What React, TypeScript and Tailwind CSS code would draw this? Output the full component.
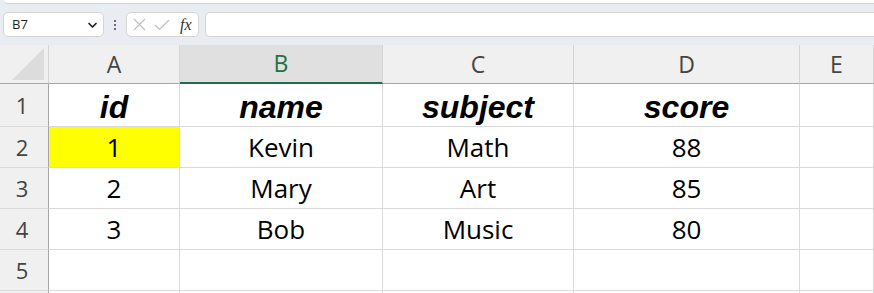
import React from "react";

const cols = [
  { key: "A", w: "w-[131px]" },
  { key: "B", w: "w-[203px]" },
  { key: "C", w: "w-[191px]" },
  { key: "D", w: "w-[226px]" },
  { key: "E", w: "flex-1" },
];

const rows: { n: number; cells: string[]; head?: boolean }[] = [
  { n: 1, cells: ["id", "name", "subject", "score", ""], head: true },
  { n: 2, cells: ["1", "Kevin", "Math", "88", ""] },
  { n: 3, cells: ["2", "Mary", "Art", "85", ""] },
  { n: 4, cells: ["3", "Bob", "Music", "80", ""] },
  { n: 5, cells: ["", "", "", "", ""] },
  { n: 6, cells: ["", "", "", "", ""] },
];

function FormulaBar() {
  return (
    <div className="flex shrink-0 items-center h-[25px] mt-[8px] mb-[8px]">
      {/* name box */}
      <div className="ml-[3px] w-[101px] h-full bg-white border border-[#d4d4d4] rounded-[5px] flex items-center justify-between pl-[8px] pr-[5px]">
        <span className="text-[13px] text-[#1f1f1f] [font-family:'Open_Sans',sans-serif]">B7</span>
        <svg width="11" height="10" viewBox="0 0 11 10" fill="none">
          <path d="M2 3.5 L5.5 7 L9 3.5" stroke="#222" strokeWidth="1.7" strokeLinecap="round" strokeLinejoin="round" />
        </svg>
      </div>
      {/* dots */}
      <div className="w-[22px] flex flex-col items-center gap-[2px]">
        <span className="w-[2px] h-[2px] bg-[#444] rounded-full" />
        <span className="w-[2px] h-[2px] bg-[#444] rounded-full" />
        <span className="w-[2px] h-[2px] bg-[#444] rounded-full" />
      </div>
      {/* cancel / enter / fx */}
      <div className="w-[73px] h-full bg-white border border-[#d4d4d4] rounded-[5px] flex items-center pl-[6px] gap-[8px]">
        <svg width="13" height="13" viewBox="0 0 13 13" fill="none">
          <path d="M1 1 L12 12 M12 1 L1 12" stroke="#bdbdbd" strokeWidth="1.1" />
        </svg>
        <svg width="16" height="12" viewBox="0 0 16 12" fill="none">
          <path d="M1 6 L5.5 10.5 L15 1" stroke="#bdbdbd" strokeWidth="1.1" />
        </svg>
        <span className="text-[16px] italic text-[#333] [font-family:'Liberation_Serif',serif] leading-none ml-[2px]">
          fx
        </span>
      </div>
      {/* formula input */}
      <div className="ml-[6px] flex-1 h-full bg-white border border-[#d4d4d4] border-r-0 rounded-l-[5px]" />
    </div>
  );
}

function ColumnHeaders() {
  return (
    <div className="flex shrink-0 h-[39px]">
      <div className="w-[49px] shrink-0 bg-[#f0f0f0] border-r border-r-[#d4d4d4] border-b border-b-[#a6a6a6] flex items-end justify-end pr-[4px] pb-[3px]">
        <svg width="32" height="32" viewBox="0 0 32 32">
          <path d="M32 0 L32 32 L0 32 Z" fill="#dcdcdc" />
        </svg>
      </div>
      {cols.map((c) => {
        const sel = c.key === "B";
        return (
          <div
            key={c.key}
            className={`${c.w} shrink-0 flex items-center justify-center text-[23px] [font-family:'Open_Sans',sans-serif] border-r border-r-[#d4d4d4] ${
              sel
                ? "bg-[#e0e0e0] text-[#1e7145] border-b-2 border-b-[#1e7145]"
                : "bg-[#f0f0f0] text-[#444] border-b border-b-[#a6a6a6]"
            }`}
          >
            {c.key}
          </div>
        );
      })}
    </div>
  );
}

function Row({ n, cells, head }: { n: number; cells: string[]; head?: boolean }) {
  return (
    <div className={`flex shrink-0 ${head ? "h-[43px]" : "h-[41px]"}`}>
      <div className="w-[49px] shrink-0 bg-[#f0f0f0] border-r border-r-[#a6a6a6] border-b border-b-[#dadada] flex items-center justify-center pr-[4px] text-[22px] text-[#444] [font-family:'Open_Sans',sans-serif]">
        {n < 6 ? n : ""}
      </div>
      {cells.map((v, i) => {
        const yellow = n === 2 && i === 0;
        return (
          <div
            key={i}
            className={`${cols[i].w} shrink-0 border-r border-r-[#dadada] border-b border-b-[#dadada] flex items-center justify-center text-black ${
              yellow ? "bg-[#ffff00]" : "bg-white"
            } ${
              head
                ? "text-[32px] font-bold italic [font-family:'Liberation_Sans',Arial,sans-serif] pt-[3px]"
                : "text-[26px] [font-family:'Open_Sans',sans-serif]"
            }`}
          >
            {v}
          </div>
        );
      })}
    </div>
  );
}

export default function App() {
  return (
    <div className="w-[874px] h-[293px] overflow-hidden bg-[#e9ecf0] flex flex-col">
      <div className="h-[4px] shrink-0 ml-[4px] bg-white rounded-bl-[6px] border-b border-[#d0d3d8]" />
      <FormulaBar />
      <ColumnHeaders />
      {rows.map((r) => (
        <Row key={r.n} {...r} />
      ))}
    </div>
  );
}
